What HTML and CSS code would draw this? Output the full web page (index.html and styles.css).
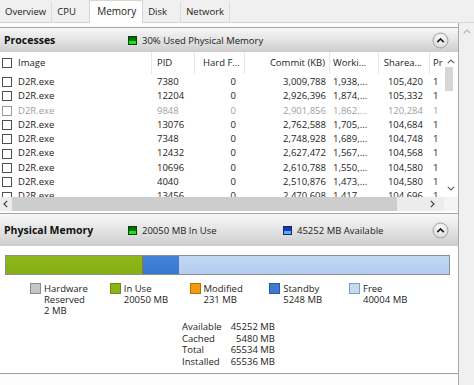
FILE: index.html
```html
<!DOCTYPE html>
<html>
<head>
<meta charset="utf-8">
<title>Resource Monitor - Memory</title>
<link rel="stylesheet" href="styles.css">
</head>
<body>
<div class="tabs">
  <div class="tab">Overview</div>
  <div class="tab">CPU</div>
  <div class="tab active">Memory</div>
  <div class="tab">Disk</div>
  <div class="tab">Network</div>
  <div class="tab-fill"></div>
</div>
<div class="main">
  <div class="content">
    <section class="panel proc">
      <div class="phead">
        <span class="ptitle">Processes</span>
        <span class="pinfo"><i class="ico ico-green"></i>30% Used Physical Memory</span>
        <span class="collapse"><svg width="17" height="17" viewBox="0 0 17 17"><defs><radialGradient id="cg1" cx="50%" cy="35%" r="65%"><stop offset="0" stop-color="#ffffff"/><stop offset="1" stop-color="#d6d6d6"/></radialGradient></defs><circle cx="8.5" cy="8.5" r="7.5" fill="url(#cg1)" stroke="#a2a2a2"/><path d="M5.3 10.2 L8.5 7 L11.7 10.2" fill="none" stroke="#1e1e1e" stroke-width="1.7"/></svg></span>
      </div>
      <div class="listwrap">
        <div class="list">
          <div class="row head">
            <div class="c c-img"><i class="cb"></i>Image</div>
            <div class="c c-pid">PID</div>
            <div class="c c-hard">Hard F...</div>
            <div class="c c-commit">Commit (KB)</div>
            <div class="c c-work">Worki...</div>
            <div class="c c-share">Sharea...</div>
            <div class="c c-pr">Pr</div>
          </div>
          <div class="row"><div class="c c-img"><i class="cb"></i>D2R.exe</div><div class="c c-pid">7380</div><div class="c c-hard">0</div><div class="c c-commit">3,009,788</div><div class="c c-work">1,938,...</div><div class="c c-share">105,420</div><div class="c c-pr">1</div></div>
          <div class="row"><div class="c c-img"><i class="cb"></i>D2R.exe</div><div class="c c-pid">12204</div><div class="c c-hard">0</div><div class="c c-commit">2,926,396</div><div class="c c-work">1,874,...</div><div class="c c-share">105,332</div><div class="c c-pr">1</div></div>
          <div class="row dim"><div class="c c-img"><i class="cb"></i>D2R.exe</div><div class="c c-pid">9848</div><div class="c c-hard">0</div><div class="c c-commit">2,901,856</div><div class="c c-work">1,862,...</div><div class="c c-share">120,284</div><div class="c c-pr">1</div></div>
          <div class="row"><div class="c c-img"><i class="cb"></i>D2R.exe</div><div class="c c-pid">13076</div><div class="c c-hard">0</div><div class="c c-commit">2,762,588</div><div class="c c-work">1,705,...</div><div class="c c-share">104,684</div><div class="c c-pr">1</div></div>
          <div class="row"><div class="c c-img"><i class="cb"></i>D2R.exe</div><div class="c c-pid">7348</div><div class="c c-hard">0</div><div class="c c-commit">2,748,928</div><div class="c c-work">1,689,...</div><div class="c c-share">104,748</div><div class="c c-pr">1</div></div>
          <div class="row"><div class="c c-img"><i class="cb"></i>D2R.exe</div><div class="c c-pid">12432</div><div class="c c-hard">0</div><div class="c c-commit">2,627,472</div><div class="c c-work">1,567,...</div><div class="c c-share">104,568</div><div class="c c-pr">1</div></div>
          <div class="row"><div class="c c-img"><i class="cb"></i>D2R.exe</div><div class="c c-pid">10696</div><div class="c c-hard">0</div><div class="c c-commit">2,610,788</div><div class="c c-work">1,550,...</div><div class="c c-share">104,580</div><div class="c c-pr">1</div></div>
          <div class="row"><div class="c c-img"><i class="cb"></i>D2R.exe</div><div class="c c-pid">4040</div><div class="c c-hard">0</div><div class="c c-commit">2,510,876</div><div class="c c-work">1,473,...</div><div class="c c-share">104,580</div><div class="c c-pr">1</div></div>
          <div class="row"><div class="c c-img"><i class="cb"></i>D2R.exe</div><div class="c c-pid">13456</div><div class="c c-hard">0</div><div class="c c-commit">2,470,608</div><div class="c c-work">1,417,...</div><div class="c c-share">104,696</div><div class="c c-pr">1</div></div>
        </div>
        <div class="vscroll">
          <svg class="arr" width="8" height="5" viewBox="0 0 8 5"><path d="M0.8 4.2 L4 1 L7.2 4.2" fill="none" stroke="#606060" stroke-width="1.2"/></svg>
          <div class="vthumb"></div>
          <div class="vspace"></div>
          <svg class="arr" width="8" height="5" viewBox="0 0 8 5"><path d="M0.8 0.8 L4 4 L7.2 0.8" fill="none" stroke="#606060" stroke-width="1.2"/></svg>
        </div>
      </div>
      <div class="hrow">
        <div class="hscroll">
          <svg class="harr" width="5" height="8" viewBox="0 0 5 8"><path d="M4.2 0.8 L1 4 L4.2 7.2" fill="none" stroke="#404040" stroke-width="1.2"/></svg>
          <div class="hthumb"></div>
          <svg class="harr" width="5" height="8" viewBox="0 0 5 8"><path d="M0.8 0.8 L4 4 L0.8 7.2" fill="none" stroke="#404040" stroke-width="1.2"/></svg>
        </div>
        <div class="corner"></div>
      </div>
    </section>

    <section class="panel phys">
      <div class="phead tall">
        <span class="ptitle">Physical Memory</span>
        <span class="pinfo first"><i class="ico ico-green"></i>20050 MB In Use</span>
        <span class="pinfo"><i class="ico ico-blue"></i>45252 MB Available</span>
        <span class="collapse"><svg width="17" height="17" viewBox="0 0 17 17"><defs><radialGradient id="cg2" cx="50%" cy="35%" r="65%"><stop offset="0" stop-color="#ffffff"/><stop offset="1" stop-color="#d6d6d6"/></radialGradient></defs><circle cx="8.5" cy="8.5" r="7.5" fill="url(#cg2)" stroke="#a2a2a2"/><path d="M5.3 10.2 L8.5 7 L11.7 10.2" fill="none" stroke="#1e1e1e" stroke-width="1.7"/></svg></span>
      </div>
      <div class="pbody">
        <div class="membar">
          <div class="seg seg-hw" style="width:0.003%"></div>
          <div class="seg seg-use" style="width:30.59%"></div>
          <div class="seg seg-mod" style="width:0.35%"></div>
          <div class="seg seg-stb" style="width:8.01%"></div>
          <div class="seg seg-free" style="width:61.04%"></div>
        </div>
        <div class="legend">
          <div class="li"><i class="sw sw-hw"></i><span>Hardware<br>Reserved<br>2 MB</span></div>
          <div class="li"><i class="sw sw-use"></i><span>In Use<br>20050 MB</span></div>
          <div class="li"><i class="sw sw-mod"></i><span>Modified<br>231 MB</span></div>
          <div class="li"><i class="sw sw-stb"></i><span>Standby<br>5248 MB</span></div>
          <div class="li"><i class="sw sw-free"></i><span>Free<br>40004 MB</span></div>
        </div>
        <div class="summary">
          <span>Available</span><span class="v">45252 MB</span>
          <span>Cached</span><span class="v">5480 MB</span>
          <span>Total</span><span class="v">65534 MB</span>
          <span>Installed</span><span class="v">65536 MB</span>
        </div>
      </div>
    </section>
  </div>
  <div class="outer">
    <svg width="8" height="5" viewBox="0 0 8 5"><path d="M0.8 4.2 L4 1 L7.2 4.2" fill="none" stroke="#b4b4b4" stroke-width="1.2"/></svg>
  </div>
</div>
</body>
</html>
```

FILE: styles.css
```css
* { box-sizing: border-box; margin: 0; padding: 0; }
html, body { width: 474px; height: 385px; overflow: hidden; }
body {
  background: #f0f0f0;
  font-family: "Open Sans", "Noto Sans", sans-serif;
  font-size: 9.5px;
  color: #1c1c1c;
}
i { display: block; font-style: normal; }

/* tabs */
.tabs {
  display: flex;
  height: 23px;
  border-bottom: 1px solid #d6d6d6;
  background: #f0f0f0;
}
.tab {
  margin-top: 2px;
  min-width: 38px;
  padding: 0 5px;
  display: flex;
  align-items: center;
  border-right: 1px solid #dcdcdc;
  line-height: 1;
  color: #1a1a1a;
}
.tab.active {
  margin-top: 0;
  margin-bottom: -1px;
  margin-left: -1px;
  padding: 0 6px 3px 7px;
  background: #fff;
  border: 1px solid #d6d6d6;
  border-bottom: none;
  font-size: 10px;
}
.tab-fill { flex: 1; }

/* main */
.main { display: flex; height: 362px; }
.content {
  width: 459px;
  padding-top: 4px;
  background: #fcfcfc;
  border-right: 1px solid #a8a8a8;
}
.outer {
  flex: 1;
  background: #f0f0f0;
  display: flex;
  justify-content: center;
  padding-top: 6px;
}
.outer svg { display: block; }

/* panels */
.panel { background: #fff; }
.proc {
  border-top: 1px solid #a6a6a6;
  padding-bottom: 2px;
}
.phys {
  border-top: 1px solid #a6a6a6;
  border-bottom: 1px solid #a0a0a0;
}
.phead {
  height: 24px;
  display: flex;
  align-items: center;
  padding-left: 4px;
  background: linear-gradient(to bottom, #f7f7f7 0%, #e6e6e6 45%, #cdcdcd 100%);
}
.phead.tall { height: 32px; }
.ptitle {
  width: 124px;
  font-weight: 700;
  font-size: 10.5px;
  color: #111;
}
.pinfo { display: flex; align-items: center; color: #1a1a1a; }
.pinfo.first { width: 155px; }
.ico {
  width: 9px;
  height: 9px;
  margin-right: 5px;
  border: 1px solid #1d3d1d;
}
.ico-green { background: linear-gradient(to bottom, #006b00 0%, #007a00 58%, #19e619 58%, #19e619 100%); border-color: #0c3c0c; }
.ico-blue { background: linear-gradient(to bottom, #1530a8 0%, #1b3fbf 55%, #62a8f2 55%, #62a8f2 100%); border-color: #14286c; }
.collapse { margin-left: auto; margin-right: 9px; display: flex; }
.collapse svg { display: block; }

/* list */
.listwrap { display: flex; height: 145px; }
.list { width: 444px; overflow: hidden; }
.row {
  display: grid;
  grid-template-columns: 152px 43px 50px 85px 49px 51px 14px;
  height: 14.3px;
  line-height: 14.3px;
  white-space: nowrap;
}
.row.head {
  height: 23px;
  line-height: 22px;
  padding-bottom: 1px;
}
.row.head .c { border-right: 1px solid #e6e6e6; }
.row.head .c-pr { border-right: none; }
.row.dim { color: #a0a0a0; }
.row.dim .cb { border-color: #9a9a9a; }
.c { overflow: hidden; }
.c-img { display: flex; align-items: center; padding-left: 2px; }
.cb {
  width: 10px;
  height: 10px;
  border: 1px solid #505050;
  background: #fff;
  margin-right: 6px;
}
.c-pid { padding-left: 5px; }
.c-hard { text-align: right; padding-right: 9px; }
.row.head .c-hard { text-align: left; padding-left: 8px; padding-right: 0; }
.c-commit { text-align: right; padding-right: 4px; }
.c-work { padding-left: 3px; }
.c-share { text-align: right; padding-right: 7px; }
.c-pr { padding-left: 3px; }

.vscroll {
  width: 14px;
  display: flex;
  flex-direction: column;
  align-items: flex-start;
  padding: 7px 0 6px 1px;
  background: #fff;
}
.vscroll .arr { display: block; margin-left: 2px; }
.vthumb { width: 8px; height: 24px; margin-top: 3px; background: #d6d6d6; }
.vspace { flex: 1; }

.hrow { display: flex; height: 14px; }
.hscroll {
  width: 444px;
  display: flex;
  align-items: center;
  background: #ececec;
  padding: 0 9px 0 3px;
}
.harr { display: block; }
.hthumb { width: 385px; height: 14px; margin-left: 4px; margin-right: auto; background: #cdcdcd; }
.corner { flex: 1; background: #f4f4f4; }

/* physical memory body */
.pbody { padding: 9px 8px 5px 5px; }
.membar {
  display: flex;
  height: 20px;
  border: 1px solid #8e8e8e;
}
.seg { height: 100%; }
.seg-hw { background: #c0c0c0; }
.seg-use { background: linear-gradient(to bottom, #8fb81c, #86ae12); }
.seg-mod { background: #a07030; }
.seg-stb { background: linear-gradient(to bottom, #4383d8, #3a78cc); }
.seg-free { flex: 1; background: linear-gradient(to bottom, #c3d8f3, #b4cdef); }

.legend {
  display: grid;
  grid-template-columns: repeat(5, 79.75px);
  margin-top: 8px;
  padding-left: 25px;
  height: 33px;
  line-height: 11px;
  white-space: nowrap;
}
.li { display: flex; align-items: flex-start; }
.sw { width: 11px; height: 11px; margin-right: 3px; border: 1px solid #888; flex: none; }
.sw-hw { background: #c6c6c6; border-color: #8a8a8a; }
.sw-use { background: #8cb414; border-color: #6b8c12; }
.sw-mod { background: #f39a10; border-color: #b86e00; }
.sw-stb { background: #3d7bd2; border-color: #2b5a9c; }
.sw-free { background: #c4d9f2; border-color: #7d9cc2; }

.summary {
  display: grid;
  grid-template-columns: 48px 45px;
  margin-top: 5px;
  margin-left: 177px;
  line-height: 11.7px;
  white-space: nowrap;
}
.summary .v { text-align: right; }
```
